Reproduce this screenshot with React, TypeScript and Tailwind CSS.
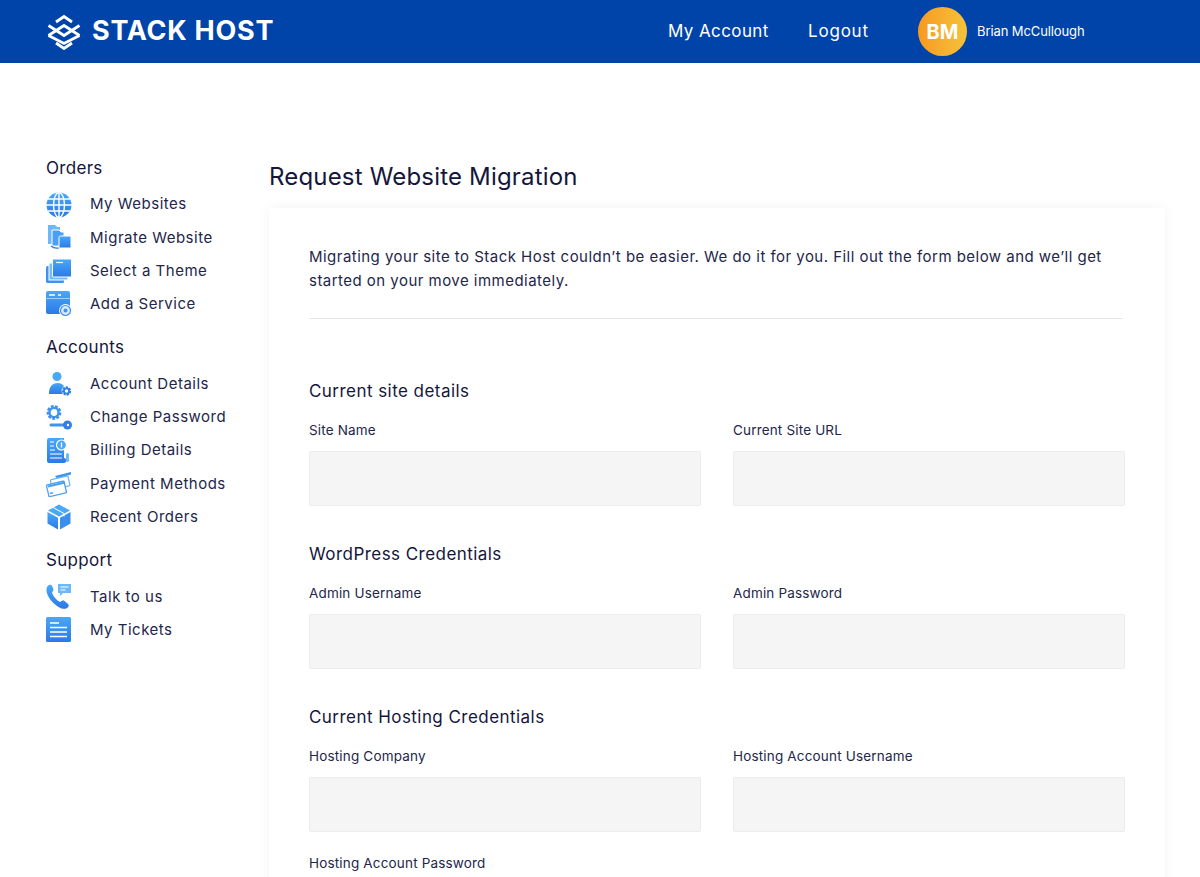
import React from 'react';

const Defs = ({ id }: { id: string }) => (
  <defs>
    <linearGradient id={id} x1="0" y1="0" x2="0" y2="1">
      <stop offset="0" stopColor="#4aa8f8" />
      <stop offset="1" stopColor="#2a7ae6" />
    </linearGradient>
  </defs>
);

const Icon = ({ id, children }: { id: string; children: React.ReactNode }) => (
  <svg width="26" height="26" viewBox="0 0 26 26" fill="none" className="shrink-0">
    <Defs id={id} />
    {children}
  </svg>
);

const icons: Record<string, React.ReactNode> = {
  globe: (
    <Icon id="g1">
      <circle cx="13" cy="13" r="12.5" fill="url(#g1)" />
      <g stroke="#fff" strokeWidth="1.4">
        <ellipse cx="13" cy="13" rx="5.5" ry="12.5" />
        <path d="M13 0v26M0 13h26M2 7h22M2 19h22" />
      </g>
    </Icon>
  ),
  migrate: (
    <Icon id="g2">
      <path d="M2 0h7l2 2h3v17H2z" fill="#6db8f8" />
      <path d="M6 5h7l2 2h3v14H6z" fill="#4aa0f5" stroke="#fff" strokeWidth="1" />
      <rect x="13" y="11" width="12" height="12" rx="1.5" fill="url(#g2)" stroke="#fff" strokeWidth="1" />
      <path d="M5 21c2 2 5 2.5 8 2" stroke="#2a7ae6" strokeWidth="1.2" />
    </Icon>
  ),
  theme: (
    <Icon id="g3">
      <rect x="0" y="8" width="18" height="17" rx="1.5" fill="#3d93ee" />
      <rect x="3" y="5" width="19" height="17" fill="#74bcf9" stroke="#fff" strokeWidth="1" />
      <rect x="6.5" y="1" width="19" height="18" rx="1" fill="url(#g3)" stroke="#fff" strokeWidth="1" />
      <path d="M10 4.5h7" stroke="#fff" strokeWidth="1.2" />
    </Icon>
  ),
  service: (
    <Icon id="g4">
      <rect x="0" y="0" width="24" height="23" rx="2" fill="url(#g4)" />
      <path d="M3 4h6M12 4h3" stroke="#fff" strokeWidth="1.3" />
      <path d="M0 7.5h24" stroke="#9fd2fb" strokeWidth="1" />
      <circle cx="19.5" cy="19.5" r="6.5" fill="#fff" />
      <circle cx="19.5" cy="19.5" r="5" fill="#d6ebfd" stroke="#3d93ee" strokeWidth="1.2" />
      <circle cx="19.5" cy="19.5" r="2" fill="#3d93ee" />
    </Icon>
  ),
  account: (
    <Icon id="g5">
      <circle cx="11" cy="5.5" r="4.5" fill="#4aa8f8" />
      <path d="M3 23c0-7 3-11 8.5-11 3 0 5 1 6.5 3-3 3-3 6-1 8z" fill="url(#g5)" />
      <circle cx="20.5" cy="20" r="3.4" stroke="#2f80e8" strokeWidth="2.6" strokeDasharray="2 1" />
      <circle cx="20.5" cy="20" r="2.6" stroke="#2f80e8" strokeWidth="1.8" />
    </Icon>
  ),
  password: (
    <Icon id="g6">
      <circle cx="8" cy="7.5" r="5.6" stroke="#3d93ee" strokeWidth="3.6" strokeDasharray="2.6 1.2" />
      <circle cx="8" cy="7.5" r="4.6" stroke="#3d93ee" strokeWidth="2.4" />
      <path d="M5 20h15" stroke="#3d93ee" strokeWidth="3" strokeLinecap="round" />
      <circle cx="21.5" cy="20" r="4.5" fill="#2f80e8" />
      <circle cx="22" cy="20" r="1.2" fill="#fff" />
    </Icon>
  ),
  billing: (
    <Icon id="g7">
      <path d="M1 2a2 2 0 0 1 2-2h15v20c3 0 3 5 0 5H3a2 2 0 0 1-2-2z" fill="url(#g7)" />
      <rect x="20" y="15" width="3" height="9" rx="1.5" fill="#6db8f8" />
      <circle cx="15.5" cy="7" r="5" fill="#4aa8f8" stroke="#fff" strokeWidth="1.2" />
      <path d="M15.5 4.5v5" stroke="#fff" strokeWidth="1.3" />
      <path d="M4 4h4M4 8h4M4 12h5M4 16h12M4 20h12" stroke="#fff" strokeWidth="1.1" />
    </Icon>
  ),
  payment: (
    <Icon id="g8">
      <path d="M9 5 25 1v2.5L11 7.5z" fill="#3d93ee" />
      <rect x="5" y="7" width="18" height="10" rx="1" transform="rotate(-13 13 11)" fill="#fff" stroke="#6db8f8" strokeWidth="1.3" />
      <rect x="1.5" y="12" width="18" height="12" rx="1" transform="rotate(-13 10 18)" fill="#fff" stroke="#4aa0f5" strokeWidth="1.3" />
      <path d="M2 15.5 19 11.5" stroke="#4aa0f5" strokeWidth="2" />
      <path d="M4 22.5l3-.7" stroke="#4aa0f5" strokeWidth="1.5" />
    </Icon>
  ),
  box: (
    <Icon id="g9">
      <path d="M13 0.5 24 6.5 13 12.5 2 6.5z" fill="#4aa8f8" />
      <path d="M1.5 8 12 13.8V25.5L1.5 19.5z" fill="url(#g9)" />
      <path d="M24.5 8 14 13.8V25.5L24.5 19.5z" fill="#3a8eec" />
      <path d="M7 3.5 18 9.5v3" stroke="#fff" strokeWidth="1" />
    </Icon>
  ),
  talk: (
    <Icon id="g10">
      <path d="M3 1c2-1 3 0 4 3 1 2 0 3-1 4.500C7 12 10 16 14 18c1.500-1 3-2 4.500-1l3.500 3c1.500 1.500.5 3-1 4-2 1.500-5 1-8.500-1C6 19 1 12 0.500 7 .3 4 1 2 3 1z" fill="url(#g10)" />
      <path d="M12 0h13v9h-8l-3 3V9h-2z" fill="#6db8f8" />
      <path d="M14.5 3h8M14.5 6h5" stroke="#fff" strokeWidth="1.1" />
    </Icon>
  ),
  tickets: (
    <Icon id="g11">
      <rect x="0" y="0" width="25" height="25" rx="1.5" fill="url(#g11)" />
      <path d="M4 6h9M4 10.5h17M4 15h17M4 19.5h17" stroke="#fff" strokeWidth="1.3" />
    </Icon>
  ),
};

const nav = [
  {
    title: 'Orders',
    items: [
      ['globe', 'My Websites'],
      ['migrate', 'Migrate Website'],
      ['theme', 'Select a Theme'],
      ['service', 'Add a Service'],
    ],
  },
  {
    title: 'Accounts',
    items: [
      ['account', 'Account Details'],
      ['password', 'Change Password'],
      ['billing', 'Billing Details'],
      ['payment', 'Payment Methods'],
      ['box', 'Recent Orders'],
    ],
  },
  {
    title: 'Support',
    items: [
      ['talk', 'Talk to us'],
      ['tickets', 'My Tickets'],
    ],
  },
];

const sections = [
  { title: 'Current site details', fields: ['Site Name', 'Current Site URL'] },
  { title: 'WordPress Credentials', fields: ['Admin Username', 'Admin Password'] },
  {
    title: 'Current Hosting Credentials',
    fields: ['Hosting Company', 'Hosting Account Username', 'Hosting Account Password'],
  },
];

function Logo() {
  return (
    <svg width="36" height="36" viewBox="0 0 36 36" fill="none" stroke="#fff" strokeWidth="2.8">
      <path d="M10 8 18 2.500l8 5.500" />
      <path d="M2.500 11.500l15.500 10 15.500-10" />
      <path d="M2.500 21.500l15.500-10 15.500 10" />
      <path d="M2.500 21.500l15.500 8 15.500-8" />
      <path d="M10 29l8 5.500 8-5.500" />
    </svg>
  );
}

export default function App() {
  return (
    <div className="h-screen overflow-hidden bg-white text-[#14163c] font-['Inter',sans-serif]">
      <header className="h-[63px] bg-[#0044a9] flex items-center pl-[46px] text-white">
        <Logo />
        <span className="ml-[10px] w-[576px] text-[27px] font-bold tracking-[0.75px]">STACK HOST</span>
        <a className="text-[17px] w-[140px] tracking-[0.4px]">My Account</a>
        <a className="text-[17px] w-[110px] tracking-[0.8px]">Logout</a>
        <div className="w-[49px] h-[49px] rounded-full bg-gradient-to-r from-[#f79a1f] to-[#f5c23a] flex items-center justify-center text-[20px] font-bold">
          BM
        </div>
        <span className="ml-[10px] text-[13px] tracking-[-0.1px]">Brian McCullough</span>
      </header>

      <div className="flex">
        <aside className="w-[269px] shrink-0 pl-[46px] pt-[92.5px]">
          {nav.map((group) => (
            <div key={group.title} className="mb-[14.5px]">
              <h3 className="text-[17px] leading-[24px] tracking-[0.3px] mb-[8.5px]">{group.title}</h3>
              <ul>
                {group.items.map(([icon, label]) => (
                  <li key={label} className="h-[33.2px] flex items-center gap-[18px] text-[15px] tracking-[0.5px] text-[#23264a]">
                    {icons[icon]}
                    {label}
                  </li>
                ))}
              </ul>
            </div>
          ))}
        </aside>

        <main className="w-[896px] shrink-0 pt-[98px]">
          <h1 className="text-[24px] leading-[32px] tracking-[0.18px] mb-[15px]">Request Website Migration</h1>
          <div className="bg-white shadow-[0_0_12px_rgba(20,22,60,0.05)] pt-[37px] px-[40px]">
            <p className="text-[15px] leading-[24px] tracking-[0.47px] text-[#23264a] w-[814px]">
              Migrating your site to Stack Host couldn’t be easier. We do it for you. Fill out the form below and we’ll get started on your move immediately.
            </p>
            <div className="h-px bg-[#e6e6e6] w-[814px] mt-[25px] mb-[60px]" />
            {sections.map((section) => (
              <section key={section.title} className="mb-[36px]">
                <h2 className="text-[17px] leading-[24px] tracking-[0.45px] mb-[18px]">{section.title}</h2>
                <div className="grid grid-cols-[392px_392px] gap-x-[32px] gap-y-[22px]">
                  {section.fields.map((field) => (
                    <label key={field} className="block">
                      <span className="block text-[13.5px] leading-[18px] tracking-[0.17px] text-[#23264a] mb-[12px]">{field}</span>
                      <input className="block w-full h-[55px] bg-[#f5f5f5] border border-[#ececec] rounded-[2px]" />
                    </label>
                  ))}
                </div>
              </section>
            ))}
          </div>
        </main>
      </div>
    </div>
  );
}
